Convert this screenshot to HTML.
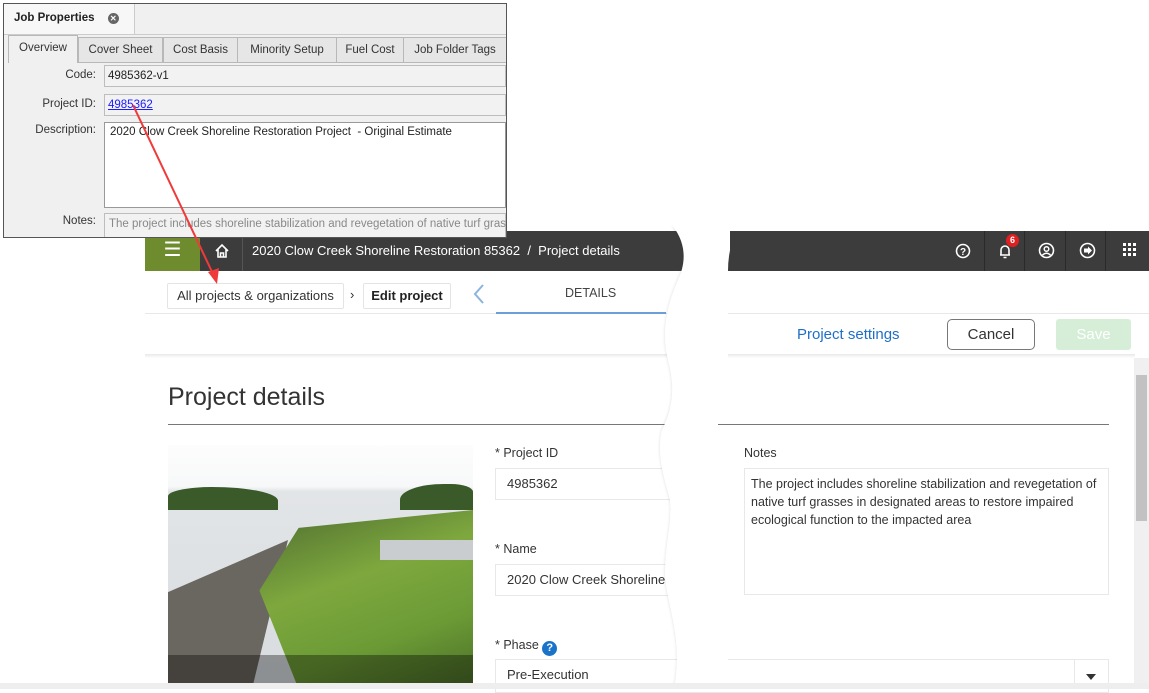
<!DOCTYPE html>
<html><head><meta charset="utf-8"><style>
*{box-sizing:border-box;margin:0;padding:0}
body{width:1149px;height:689px;position:relative;overflow:hidden;background:#fff;font-family:"Liberation Sans",sans-serif}
.a{position:absolute}
.jp{font-family:"Liberation Sans",sans-serif;font-size:11px;color:#222}
.tab{position:absolute;top:33px;height:26px;border:1px solid #b8b8b8;background:#e6e6e6;font-size:11.5px;color:#333;line-height:24px;text-align:center}
.lbl{position:absolute;right:410px;font-size:11.5px;color:#333;text-align:right}
.fld{position:absolute;left:100px;right:0;border:1px solid #bdbdbd;background:#f2f2f2;font-size:11.5px;padding-left:3px}
.inp{position:absolute;border:1px solid #e8e8e8;background:#fff;font-size:13px;color:#333;padding-left:11px}
</style></head><body>

<div class="a" style="left:145px;top:231px;width:1004px;height:40px;background:#3c3c3c"></div>
<div class="a" style="left:145px;top:231px;width:55px;height:40px;background:#6e8b2d;color:#fff;font-size:20px;text-align:center;line-height:38px">☰</div>
<div class="a" style="left:242px;top:231px;width:1px;height:40px;background:#555"></div>
<svg class="a" style="left:213px;top:242px" width="18" height="18" viewBox="0 0 18 18"><path d="M3 9 L9 3 L15 9 M5 7.5 V15 H13 V7.5 M7.5 15 V11 H10.5 V15" fill="none" stroke="#fff" stroke-width="1.6"/></svg>
<div class="a" style="left:252px;top:243px;color:#fff;font-size:13px">2020 Clow Creek Shoreline Restoration 85362 &nbsp;/&nbsp; Project details</div>
<div class="a" style="left:984px;top:231px;width:1px;height:40px;background:#2a2a2a"></div>
<div class="a" style="left:1024px;top:231px;width:1px;height:40px;background:#2a2a2a"></div>
<div class="a" style="left:1065px;top:231px;width:1px;height:40px;background:#2a2a2a"></div>
<div class="a" style="left:1105px;top:231px;width:1px;height:40px;background:#2a2a2a"></div>
<svg class="a" style="left:955px;top:243px" width="16" height="16"><circle cx="8" cy="8" r="6.5" fill="none" stroke="#fff" stroke-width="1.6"/><text x="8" y="12" font-size="10" font-weight="bold" fill="#fff" text-anchor="middle" font-family="Liberation Sans">?</text></svg>
<svg class="a" style="left:996px;top:242px" width="18" height="18"><path d="M4 13 H14 M5 13 V8 A4 4 0 0 1 13 8 V13 M7.5 15.5 H10.5" fill="none" stroke="#fff" stroke-width="1.6"/></svg>
<div class="a" style="left:1006px;top:234px;width:13px;height:13px;border-radius:50%;background:#e02020;color:#fff;font-size:9px;font-weight:bold;text-align:center;line-height:13px">6</div>
<svg class="a" style="left:1038px;top:242px" width="17" height="17"><circle cx="8.5" cy="8.5" r="7" fill="none" stroke="#fff" stroke-width="1.6"/><circle cx="8.5" cy="7" r="2.3" fill="none" stroke="#fff" stroke-width="1.5"/><path d="M4.5 13 Q8.5 9.5 12.5 13" fill="none" stroke="#fff" stroke-width="1.5"/></svg>
<svg class="a" style="left:1079px;top:242px" width="17" height="17"><circle cx="8.5" cy="8.5" r="7" fill="none" stroke="#fff" stroke-width="1.6"/><path d="M5 6.5 H9 V4.5 L13 8.5 L9 12.5 V10.5 H5 Z" fill="#fff"/></svg>
<svg class="a" style="left:1123px;top:243px" width="14" height="14" fill="#fff"><rect x="0" y="0" width="3" height="3"/><rect x="5" y="0" width="3" height="3"/><rect x="10" y="0" width="3" height="3"/><rect x="0" y="5" width="3" height="3"/><rect x="5" y="5" width="3" height="3"/><rect x="10" y="5" width="3" height="3"/><rect x="0" y="10" width="3" height="3"/><rect x="5" y="10" width="3" height="3"/><rect x="10" y="10" width="3" height="3"/></svg>

<div class="a" style="left:167px;top:283px;width:177px;height:26px;border:1px solid #e4e4e4;border-radius:2px;font-size:13px;color:#333;line-height:24px;text-align:center">All projects &amp; organizations</div>
<div class="a" style="left:350px;top:287px;font-size:13px;color:#333">›</div>
<div class="a" style="left:363px;top:283px;width:88px;height:26px;border:1px solid #e4e4e4;border-radius:2px;font-size:13px;font-weight:bold;color:#222;line-height:24px;text-align:center">Edit project</div>
<svg class="a" style="left:472px;top:283px" width="14" height="22"><path d="M11 2 L3 11 L11 20" fill="none" stroke="#8ab4e0" stroke-width="2"/></svg>
<div class="a" style="left:565px;top:286px;font-size:12.5px;color:#444">DETAILS</div>
<div class="a" style="left:145px;top:313px;width:1004px;height:1px;background:#e8e8e8"></div>
<div class="a" style="left:496px;top:312px;width:170px;height:2px;background:#6a9fd8"></div>

<div class="a" style="left:797px;top:326px;font-size:15px;color:#1e6fc8">Project settings</div>
<div class="a" style="left:947px;top:319px;width:88px;height:31px;border:1px solid #777;border-radius:5px;font-size:15px;color:#333;text-align:center;line-height:29px">Cancel</div>
<div class="a" style="left:1056px;top:319px;width:75px;height:31px;border-radius:3px;background:#d6eed8;font-size:15px;color:#fff;text-align:center;line-height:31px">Save</div>
<div class="a" style="left:145px;top:354px;width:990px;height:4px;background:linear-gradient(#e8e8e8,#fff)"></div>

<div class="a" style="left:1134px;top:358px;width:15px;height:331px;background:#f0f0f0"></div>
<div class="a" style="left:1136px;top:375px;width:11px;height:146px;background:#c2c2c2"></div>

<div class="a" style="left:168px;top:383px;font-size:25px;color:#333">Project details</div>
<div class="a" style="left:168px;top:424px;width:941px;height:1px;background:#777"></div>

<!-- photo -->
<div class="a" style="left:168px;top:445px;width:305px;height:244px;background:linear-gradient(#fdfdfd 0,#f7f8f9 17%,#e2e5e7 19%,#d8dcdf 100%)"></div>
<div class="a" style="left:168px;top:487px;width:110px;height:23px;background:#3a5a2a;border-radius:40% 60% 0 0"></div>
<div class="a" style="left:400px;top:484px;width:73px;height:26px;background:#3a5a2a;border-radius:60% 30% 0 0"></div>
<div class="a" style="left:168px;top:540px;width:120px;height:149px;background:#6a6660;clip-path:polygon(0 35%,100% 0,70% 100%,0 100%)"></div>
<div class="a" style="left:255px;top:510px;width:218px;height:179px;background:linear-gradient(160deg,#4d6b30,#7ea83e 40%,#6b9a35 70%,#4b6e28);clip-path:polygon(20% 10%,100% 0,100% 100%,20% 100%,2% 45%)"></div>
<div class="a" style="left:380px;top:540px;width:93px;height:20px;background:#c9cdd0"></div>
<div class="a" style="left:168px;top:655px;width:305px;height:34px;background:rgba(0,0,0,.35)"></div>

<div class="a" style="left:495px;top:446px;font-size:12.5px;color:#333">* Project ID</div>
<div class="inp" style="left:495px;top:468px;width:190px;height:32px;line-height:30px">4985362</div>
<div class="a" style="left:495px;top:542px;font-size:12.5px;color:#333">* Name</div>
<div class="inp" style="left:495px;top:564px;width:190px;height:32px;line-height:30px;white-space:nowrap;overflow:hidden">2020 Clow Creek Shoreline Restoration</div>
<div class="a" style="left:495px;top:638px;font-size:12.5px;color:#333">* Phase <span style="display:inline-block;width:15px;height:15px;border-radius:50%;background:#1a73c8;color:#fff;font-size:11px;font-weight:bold;text-align:center;line-height:15px;vertical-align:-2px">?</span></div>
<div class="inp" style="left:495px;top:659px;width:614px;height:34px;line-height:30px">Pre-Execution</div>

<svg class="a" style="left:640px;top:225px" width="90" height="464" viewBox="0 0 90 464">
<defs><filter id="sh" x="-50%" y="-5%" width="200%" height="110%"><feDropShadow dx="2" dy="0" stdDeviation="2" flood-color="#000" flood-opacity=".45"/></filter></defs>
<path d="M32 0 C48 20,45 40,38 55 C25 85,22 110,28 135 C36 165,32 185,22 205 C16 230,25 255,30 275 C33 300,22 330,26 360 C32 395,42 420,34 464 L90 464 L90 0 Z" fill="#fff" filter="url(#sh)"/>
</svg>
<div class="a" style="left:728px;top:231px;width:30px;height:40px;background:#3c3c3c;border-top-left-radius:14px 40px"></div>
<div class="a" style="left:728px;top:313px;width:421px;height:1px;background:#e8e8e8"></div>
<div class="a" style="left:728px;top:354px;width:406px;height:4px;background:linear-gradient(#e8e8e8,#fff)"></div>
<div class="a" style="left:718px;top:424px;width:391px;height:1px;background:#777"></div>
<div class="a" style="left:728px;top:659px;width:381px;height:1px;background:#e8e8e8"></div>
<div class="a" style="left:1108px;top:659px;width:1px;height:30px;background:#e8e8e8"></div>
<div class="a" style="left:1074px;top:660px;width:1px;height:23px;background:#e8e8e8"></div>
<div class="a" style="left:1086px;top:674px;border:5px solid transparent;border-top:6px solid #333"></div>

<div class="a" style="left:744px;top:446px;font-size:12.5px;color:#333">Notes</div>
<div class="inp" style="left:744px;top:468px;width:365px;height:127px;padding:6px 6px;line-height:18px;font-size:12.5px">The project includes shoreline stabilization and revegetation of native turf grasses in designated areas to restore impaired ecological function to the impacted area</div>

<div class="a" style="left:0;top:683px;width:1149px;height:6px;background:#eeeeee"></div>

<div class="a jp" style="left:3px;top:3px;width:504px;height:235px;border:1px solid #555;background:#f0f0f0;overflow:hidden">
  <div class="a" style="left:0;top:0;width:131px;height:30px;background:#f7f7f7;border-right:1px solid #ccc;font-weight:bold;font-size:11.5px;padding:8px 0 0 10px">Job Properties <span style="display:inline-block;margin-left:10px;width:11px;height:11px;border-radius:50%;background:#666;color:#fff;font-size:8px;text-align:center;line-height:11px">✕</span></div>
  <div class="a" style="left:0;top:30px;width:504px;height:1px;background:#ccc"></div>
  <div class="tab" style="left:4px;top:31px;width:70px;background:#f0f0f0;border-bottom:none;height:28px">Overview</div>
  <div class="tab" style="left:74px;width:85px">Cover Sheet</div>
  <div class="tab" style="left:159px;width:75px">Cost Basis</div>
  <div class="tab" style="left:233px;width:100px">Minority Setup</div>
  <div class="tab" style="left:332px;width:68px">Fuel Cost</div>
  <div class="tab" style="left:399px;width:104px">Job Folder Tags</div>
  <div class="lbl" style="top:65px">Code:</div>
  <div class="fld" style="top:61px;height:22px;line-height:20px">4985362-v1</div>
  <div class="lbl" style="top:94px">Project ID:</div>
  <div class="fld" style="top:90px;height:22px;line-height:20px"><span style="color:#1a1aff;text-decoration:underline">4985362</span></div>
  <div class="lbl" style="top:120px">Description:</div>
  <div class="fld" style="top:118px;height:86px;background:#fff;border:1px solid #999;padding:3px 0 0 5px">2020 Clow Creek Shoreline Restoration Project &nbsp;- Original Estimate</div>
  <div class="lbl" style="top:211px">Notes:</div>
  <div class="fld" style="top:209px;height:28px;color:#888;padding:4px 0 0 4px;white-space:nowrap">The project includes shoreline stabilization and revegetation of native turf grasses</div>
</div>

<svg class="a" style="left:0;top:0" width="300" height="300"><line x1="133" y1="105" x2="214" y2="276" stroke="#f03a3a" stroke-width="2"/><path d="M217 284 L208 272 L219 268 Z" fill="#f03a3a"/></svg>
</body></html>
